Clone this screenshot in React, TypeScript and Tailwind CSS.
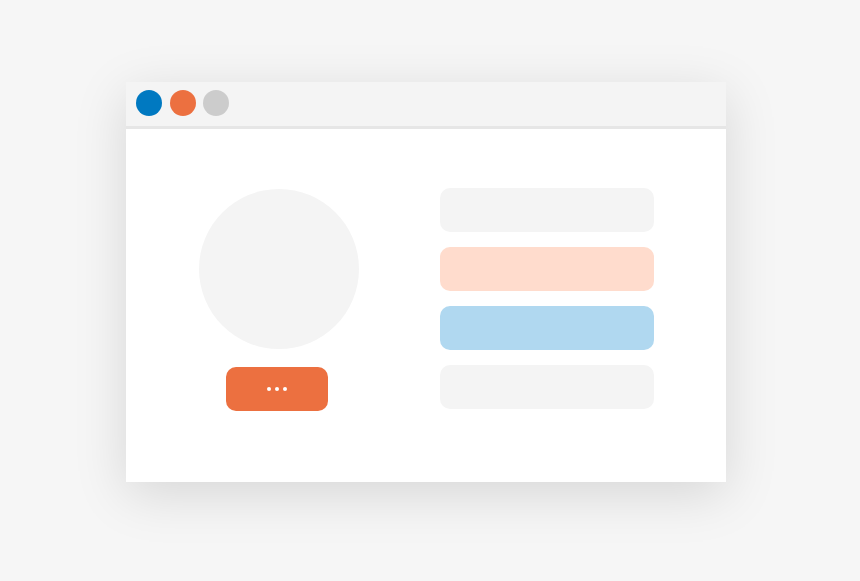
export default function App() {
  return (
    <div className="w-[860px] h-[581px] bg-[#f6f6f6] pl-[126px] pt-[82px] font-['Liberation_Sans',sans-serif]">
      <div className="w-[600px] h-[400px] bg-white flex flex-col shadow-[0_12px_50px_rgba(0,0,0,0.13)]">
        <div className="h-[47px] bg-[#f4f4f4] border-b-[3px] border-[#e6e6e6] flex items-start pt-[8px] pl-[10px] gap-[7.5px] shrink-0">
          <div className="w-[26px] h-[26px] rounded-full bg-[#0079c1]" />
          <div className="w-[26px] h-[26px] rounded-full bg-[#ec7040]" />
          <div className="w-[26px] h-[26px] rounded-full bg-[#cccccc]" />
        </div>
        <div className="flex items-start pl-[73px] pt-[59px] gap-[81px]">
          <div className="w-[160px] flex flex-col items-center pt-[1px]">
            <div className="w-[160px] h-[160px] rounded-full bg-[#f4f4f4]" />
            <div className="mt-[18px] w-[102px] h-[44px] rounded-[10px] bg-[#ec7040] flex items-center justify-center gap-[4.5px] ml-[-4px]">
              <span className="w-[3.5px] h-[3.5px] rounded-full bg-white" />
              <span className="w-[3.5px] h-[3.5px] rounded-full bg-white" />
              <span className="w-[3.5px] h-[3.5px] rounded-full bg-white" />
            </div>
          </div>
          <div className="w-[214px] flex flex-col gap-[15px]">
            <div className="h-[44px] rounded-[10px] bg-[#f4f4f4]" />
            <div className="h-[44px] rounded-[10px] bg-[#ffdccd]" />
            <div className="h-[44px] rounded-[10px] bg-[#b0d8f0]" />
            <div className="h-[44px] rounded-[10px] bg-[#f4f4f4]" />
          </div>
        </div>
      </div>
    </div>
  );
}
